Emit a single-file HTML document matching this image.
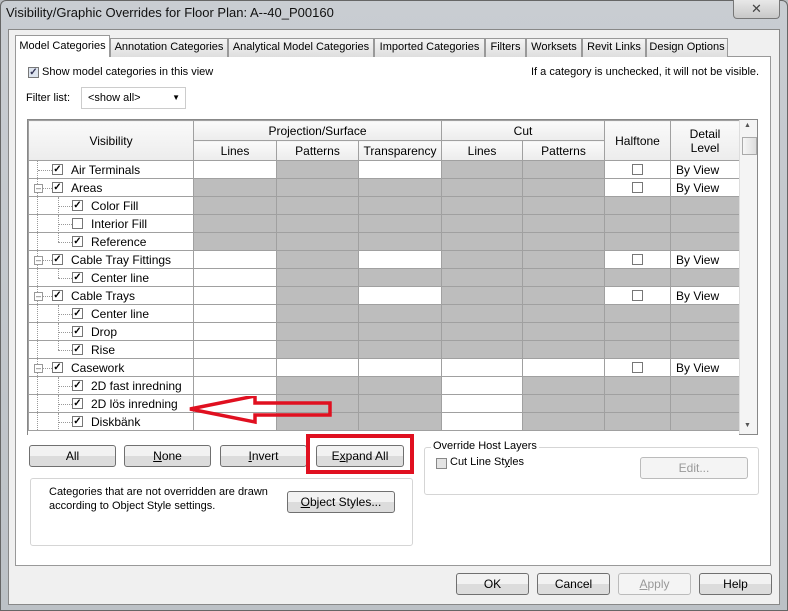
<!DOCTYPE html>
<html><head><meta charset="utf-8"><style>
*{box-sizing:border-box;margin:0;padding:0}
body{width:788px;height:611px;overflow:hidden;background:#b9bcc0;font-family:"Liberation Sans",sans-serif;font-size:12px;color:#000;position:relative}
.abs{position:absolute}
.frame{left:0;top:0;width:788px;height:611px;background:linear-gradient(#c9cdd2,#bcc1c6);border:1px solid #666;border-radius:6px 6px 0 0}
.title{left:6px;top:5px;font-size:13px;color:#111}
.close{left:733px;top:0;width:47px;height:19px;border:1px solid #777;border-top:none;border-radius:0 0 4px 4px;background:linear-gradient(#e8e8e8,#c8c8c8);text-align:center;font-size:13px;line-height:17px;color:#444}
.client{left:8px;top:29px;width:772px;height:576px;background:#f0f0f0;border:1px solid #888}
.panel{left:15px;top:56px;width:756px;height:510px;background:#fff;border:1px solid #999}
.tab{top:38px;height:19px;border:1px solid #999;border-bottom:none;background:linear-gradient(#f4f4f4,#dedede);font-size:11px;line-height:17px;text-align:center;white-space:nowrap}
.tab.sel{top:35px;height:22px;background:#fff;line-height:20px;z-index:2}
.cb{width:11px;height:11px;border:1px solid #777;background:#fff;font-size:10px;line-height:9px;text-align:center;font-weight:bold}
table{border-collapse:collapse;table-layout:fixed;position:absolute;left:28px;top:120px}
td{border:1px solid #a0a0a0;height:18px;padding:0;font-size:12px;white-space:nowrap;overflow:hidden;position:relative}
th{border:1px solid #a0a0a0;font-weight:normal;background:linear-gradient(#fafafa,#ececec);height:20px;font-size:12px}
.h{background:repeating-conic-gradient(#8e8e8e 0 25%,#ececec 0 50%) 0 0/2px 2px}
.bv{padding-left:5px}
.hc .cb{margin:0 auto}
.t .cb{position:absolute;top:3px}
.t span.l{position:absolute;top:2px}
.t .dh{position:absolute;top:9px;height:0;border-top:1px dotted #999}
.t .dv{position:absolute;top:0;height:18px;border-left:1px dotted #999;left:29px}
.mn{position:absolute;top:5px;left:5px;width:9px;height:9px;border:1px solid #999;background:#fff;font-size:9px;line-height:6px;text-align:center;color:#555;z-index:1}
.btn{height:22px;border:1px solid #707070;border-radius:3px;background:linear-gradient(#f2f2f2 50%,#dcdcdc 50%);text-align:center;line-height:20px;font-size:12px}
.dis{color:#999;border-color:#bbb;background:#f4f4f4}
.grp{border:1px solid #d5d5d5;border-radius:3px}
</style></head><body>
<div class="abs frame"></div>
<div class="abs title">Visibility/Graphic Overrides for Floor Plan: A--40_P00160</div>
<div class="abs close">✕</div>
<div class="abs client"></div>
<div class="abs panel"></div>
<div class="abs tab sel" style="left:15px;width:95px">Model Categories</div>
<div class="abs tab" style="left:110px;width:118px">Annotation Categories</div>
<div class="abs tab" style="left:228px;width:146px">Analytical Model Categories</div>
<div class="abs tab" style="left:374px;width:111px">Imported Categories</div>
<div class="abs tab" style="left:485px;width:41px">Filters</div>
<div class="abs tab" style="left:526px;width:56px">Worksets</div>
<div class="abs tab" style="left:582px;width:64px">Revit Links</div>
<div class="abs tab" style="left:646px;width:82px">Design Options</div>

<div class="abs cb" style="left:28px;top:67px;background:#dde4ee;color:#335">✓</div>
<div class="abs" style="left:42px;top:66px;font-size:11px">Show model categories in this view</div>
<div class="abs" style="left:531px;top:66px;font-size:11px">If a category is unchecked, it will not be visible.</div>
<div class="abs" style="left:26px;top:92px;font-size:11px">Filter list:</div>
<div class="abs" style="left:81px;top:87px;width:105px;height:22px;border:1px solid #ccc;background:#fff;font-size:11px;line-height:20px;padding-left:6px">&lt;show all&gt;<span style="position:absolute;right:5px;top:0;font-size:8px">▼</span></div>

<div class="abs" style="left:27px;top:119px;width:731px;height:316px;border:1px solid #888;background:#fff"></div>
<table>
<colgroup><col style="width:165px"><col style="width:83px"><col style="width:82px"><col style="width:83px"><col style="width:81px"><col style="width:82px"><col style="width:66px"><col style="width:69px"></colgroup>
<tr><th rowspan="2">Visibility</th><th colspan="3">Projection/Surface</th><th colspan="2">Cut</th><th rowspan="2">Halftone</th><th rowspan="2">Detail<br>Level</th></tr>
<tr><th>Lines</th><th>Patterns</th><th>Transparency</th><th>Lines</th><th>Patterns</th></tr>
<tr><td class="t"><div class="dh" style="left:9px;width:14px"></div><div class="cb" style="left:23px">✓</div><span class="l" style="left:42px">Air Terminals</span></td><td></td><td class="h"></td><td></td><td class="h"></td><td class="h"></td><td class="hc"><div class="cb"></div></td><td class="bv">By View</td></tr>
<tr><td class="t"><div class="dh" style="left:14px;width:9px"></div><div class="mn">–</div><div class="cb" style="left:23px">✓</div><span class="l" style="left:42px">Areas</span></td><td class="h"></td><td class="h"></td><td class="h"></td><td class="h"></td><td class="h"></td><td class="hc"><div class="cb"></div></td><td class="bv">By View</td></tr>
<tr><td class="t"><div class="dv"></div><div class="dh" style="left:29px;width:14px"></div><div class="cb" style="left:43px">✓</div><span class="l" style="left:62px">Color Fill</span></td><td class="h"></td><td class="h"></td><td class="h"></td><td class="h"></td><td class="h"></td><td class="h"></td><td class="h"></td></tr>
<tr><td class="t"><div class="dv"></div><div class="dh" style="left:29px;width:14px"></div><div class="cb" style="left:43px"></div><span class="l" style="left:62px">Interior Fill</span></td><td class="h"></td><td class="h"></td><td class="h"></td><td class="h"></td><td class="h"></td><td class="h"></td><td class="h"></td></tr>
<tr><td class="t"><div class="dv" style="height:9px"></div><div class="dh" style="left:29px;width:14px"></div><div class="cb" style="left:43px">✓</div><span class="l" style="left:62px">Reference</span></td><td class="h"></td><td class="h"></td><td class="h"></td><td class="h"></td><td class="h"></td><td class="h"></td><td class="h"></td></tr>
<tr><td class="t"><div class="dh" style="left:14px;width:9px"></div><div class="mn">–</div><div class="cb" style="left:23px">✓</div><span class="l" style="left:42px">Cable Tray Fittings</span></td><td></td><td class="h"></td><td></td><td class="h"></td><td class="h"></td><td class="hc"><div class="cb"></div></td><td class="bv">By View</td></tr>
<tr><td class="t"><div class="dv" style="height:9px"></div><div class="dh" style="left:29px;width:14px"></div><div class="cb" style="left:43px">✓</div><span class="l" style="left:62px">Center line</span></td><td></td><td class="h"></td><td class="h"></td><td class="h"></td><td class="h"></td><td class="h"></td><td class="h"></td></tr>
<tr><td class="t"><div class="dh" style="left:14px;width:9px"></div><div class="mn">–</div><div class="cb" style="left:23px">✓</div><span class="l" style="left:42px">Cable Trays</span></td><td></td><td class="h"></td><td></td><td class="h"></td><td class="h"></td><td class="hc"><div class="cb"></div></td><td class="bv">By View</td></tr>
<tr><td class="t"><div class="dv"></div><div class="dh" style="left:29px;width:14px"></div><div class="cb" style="left:43px">✓</div><span class="l" style="left:62px">Center line</span></td><td></td><td class="h"></td><td class="h"></td><td class="h"></td><td class="h"></td><td class="h"></td><td class="h"></td></tr>
<tr><td class="t"><div class="dv"></div><div class="dh" style="left:29px;width:14px"></div><div class="cb" style="left:43px">✓</div><span class="l" style="left:62px">Drop</span></td><td></td><td class="h"></td><td class="h"></td><td class="h"></td><td class="h"></td><td class="h"></td><td class="h"></td></tr>
<tr><td class="t"><div class="dv" style="height:9px"></div><div class="dh" style="left:29px;width:14px"></div><div class="cb" style="left:43px">✓</div><span class="l" style="left:62px">Rise</span></td><td></td><td class="h"></td><td class="h"></td><td class="h"></td><td class="h"></td><td class="h"></td><td class="h"></td></tr>
<tr><td class="t"><div class="dh" style="left:14px;width:9px"></div><div class="mn">–</div><div class="cb" style="left:23px">✓</div><span class="l" style="left:42px">Casework</span></td><td></td><td></td><td></td><td></td><td></td><td class="hc"><div class="cb"></div></td><td class="bv">By View</td></tr>
<tr><td class="t"><div class="dv"></div><div class="dh" style="left:29px;width:14px"></div><div class="cb" style="left:43px">✓</div><span class="l" style="left:62px">2D fast inredning</span></td><td></td><td class="h"></td><td class="h"></td><td></td><td class="h"></td><td class="h"></td><td class="h"></td></tr>
<tr><td class="t"><div class="dv"></div><div class="dh" style="left:29px;width:14px"></div><div class="cb" style="left:43px">✓</div><span class="l" style="left:62px">2D lös inredning</span></td><td></td><td class="h"></td><td class="h"></td><td></td><td class="h"></td><td class="h"></td><td class="h"></td></tr>
<tr><td class="t"><div class="dv"></div><div class="dh" style="left:29px;width:14px"></div><div class="cb" style="left:43px">✓</div><span class="l" style="left:62px">Diskbänk</span></td><td></td><td class="h"></td><td class="h"></td><td></td><td class="h"></td><td class="h"></td><td class="h"></td></tr>
</table>
<div class="abs" style="left:37px;top:161px;height:273px;border-left:1px dotted #999"></div>
<div class="abs" style="left:28px;top:431px;width:711px;height:4px;background:#fff"></div>
<div class="abs" style="left:739px;top:120px;width:18px;height:314px;background:#f4f4f4;border-left:1px solid #ddd"></div>
<div class="abs" style="left:744px;top:122px;font-size:7px;color:#555">▲</div>
<div class="abs" style="left:742px;top:137px;width:15px;height:18px;border:1px solid #aaa;background:linear-gradient(90deg,#f6f6f6,#ddd)"></div>
<div class="abs" style="left:744px;top:422px;font-size:7px;color:#555">▼</div>

<svg class="abs" style="left:185px;top:396px" width="150" height="30"><polygon points="5,13 70,0 70,7 145,7 145,19 70,19 70,26" fill="none" stroke="#e01020" stroke-width="3.5"/></svg>

<div class="abs btn" style="left:29px;top:445px;width:87px">All</div>
<div class="abs btn" style="left:124px;top:445px;width:87px"><u>N</u>one</div>
<div class="abs btn" style="left:220px;top:445px;width:87px"><u>I</u>nvert</div>
<div class="abs btn" style="left:316px;top:445px;width:88px">E<u>x</u>pand All</div>
<div class="abs" style="left:306px;top:434px;width:108px;height:40px;border:4px solid #e01020"></div>

<div class="abs grp" style="left:30px;top:478px;width:383px;height:68px"></div>
<div class="abs" style="left:49px;top:485px;font-size:11px;line-height:14px">Categories that are not overridden are drawn<br>according to Object Style settings.</div>
<div class="abs btn" style="left:287px;top:491px;width:108px"><u>O</u>bject Styles...</div>

<div class="abs grp" style="left:424px;top:447px;width:335px;height:48px"></div>
<div class="abs" style="left:431px;top:440px;font-size:11px;background:#fff;padding:0 2px">Override Host Layers</div>
<div class="abs cb" style="left:436px;top:458px;background:#e4e4e4;border-color:#888"></div>
<div class="abs" style="left:450px;top:456px;font-size:11px">Cut Line St<u>y</u>les</div>
<div class="abs btn dis" style="left:640px;top:457px;width:108px">Edit...</div>

<div class="abs btn" style="left:456px;top:573px;width:73px">OK</div>
<div class="abs btn" style="left:537px;top:573px;width:73px">Cancel</div>
<div class="abs btn dis" style="left:618px;top:573px;width:73px"><u>A</u>pply</div>
<div class="abs btn" style="left:699px;top:573px;width:73px">Help</div>
</body></html>
